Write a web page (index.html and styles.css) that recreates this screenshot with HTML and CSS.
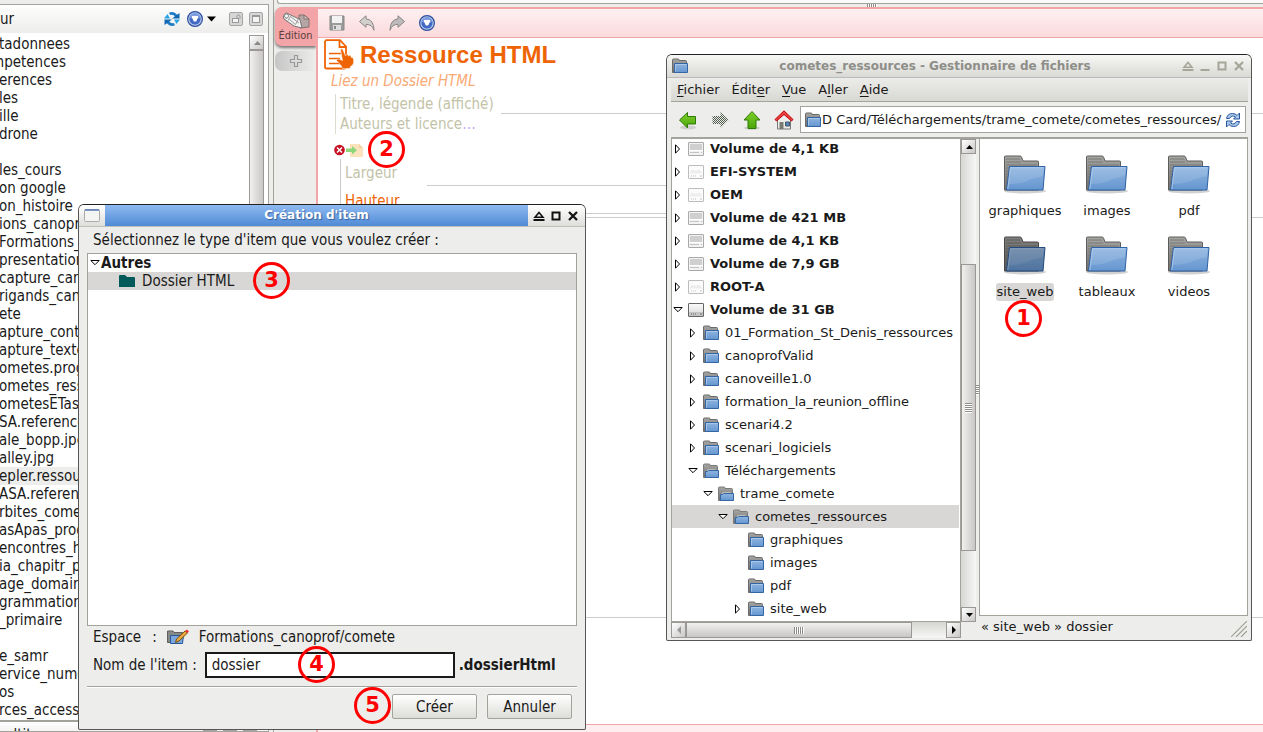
FILE: index.html
```html
<!DOCTYPE html>
<html lang="fr">
<head>
<meta charset="utf-8">
<title>Création d'item</title>
<link rel="stylesheet" href="styles.css">
</head>
<body>
<svg class="defs" aria-hidden="true">
  <defs>
    <linearGradient id="gBlue" x1="0" y1="0" x2="0" y2="1"><stop offset="0" stop-color="#8fb5e0"/><stop offset="1" stop-color="#6596d0"/></linearGradient>
    <linearGradient id="gGray" x1="0" y1="0" x2="0" y2="1"><stop offset="0" stop-color="#a6a6a4"/><stop offset="1" stop-color="#6e6e6c"/></linearGradient>
    <linearGradient id="gGreen" x1="0" y1="0" x2="0" y2="1"><stop offset="0" stop-color="#7fd02c"/><stop offset="1" stop-color="#4aa508"/></linearGradient>
    <linearGradient id="gDisk" x1="0" y1="0" x2="0" y2="1"><stop offset="0" stop-color="#fafafa"/><stop offset="1" stop-color="#d8d8d8"/></linearGradient>
    <pattern id="pDots" width="2" height="2" patternUnits="userSpaceOnUse"><rect width="1" height="1" fill="#4d5a4a"/><rect x="1" y="1" width="1" height="1" fill="#4d5a4a"/></pattern>
  </defs>
  <symbol id="folder" viewBox="0 0 16 16">
    <path d="M.5 14.5V2q0-1 1-1H6q1 0 1 1v.500h6.500q1 0 1 1V14.500z" fill="url(#gGray)" stroke="#6b6b69"/>
    <path d="M2.500 5.500h13v9h-13z" fill="url(#gBlue)" stroke="#3465a4"/>
    <path d="M3.500 13.500v-7h11" fill="none" stroke="#b4cdea" stroke-width=".8"/>
  </symbol>
  <symbol id="folder-open" viewBox="0 0 16 16">
    <path d="M.5 14.500V2q0-1 1-1H6q1 0 1 1v.500h6.500q1 0 1 1V14.500z" fill="url(#gGray)" stroke="#7b7b79"/>
    <path d="M4.500 6.500h8v5h-8z" fill="#e8e8e6"/>
    <path d="M2.500 8.500h2l1-1h10v7h-13z" fill="url(#gBlue)" stroke="#3465a4"/>
  </symbol>
  <symbol id="folder-big" viewBox="0 0 46 40">
    <ellipse cx="23" cy="37" rx="21" ry="2.500" fill="#000" opacity=".18"/>
    <path d="M2.500 36V3q0-1 1-1H18q1 0 1.500 1l1.500 4h14.500q1 0 1 1v28z" fill="url(#gGray)" stroke="#5c5c5a"/>
    <path d="M4 5h14M4 8h15M4 11h31M4 14h3M4 17h3M4 20h3M4 23h2M4 26h2M4 29h2M4 32h2" stroke="#6f6f6d" stroke-width=".8"/>
    <path d="M7.500 12.500h35.500l-2 23.500H4.500z" fill="url(#gBlue)" stroke="#2f61a5"/>
    <path d="M8.500 14h33l-.8 8q-10 2-18 6-7 2-16 2z" fill="#fff" opacity=".12"/>
    <path d="M5.800 35 8.500 13.700h33" fill="none" stroke="#b6d0ee" stroke-width=".8"/>
  </symbol>
  <symbol id="disk" viewBox="0 0 16 14">
    <rect x=".5" y=".5" width="15" height="13" rx=".5" fill="#f2f2f2" stroke="#a9a9a9"/>
    <rect x="2" y="2" width="12" height="6" fill="#cfcfcf"/>
    <path d="M2 10.500h9M13 10.500h1" stroke="#c4c4c4"/><path d="M1 8.500h14" stroke="#fff"/>
  </symbol>
  <symbol id="disk-light" viewBox="0 0 16 14">
    <rect x=".5" y=".5" width="15" height="13" rx=".5" fill="#fcfcfc" stroke="#bcbcbc"/>
    <path d="M1.500 8.500h13l-3-4q-4 2-8 0z" fill="#ededed"/>
    <path d="M3 11h1M5 11h1M7 11h1M12 11h2" stroke="#dedede" stroke-width="2"/>
  </symbol>
  <symbol id="disk-dark" viewBox="0 0 16 14">
    <rect x=".5" y=".5" width="15" height="13" rx=".5" fill="url(#gDisk)" stroke="#666"/>
    <path d="M1 9h14v4H1z" fill="#c4c4c4"/>
    <path d="M3 11h1M5 11h1M7 11h1M12 11h2" stroke="#999" stroke-width="2"/>
  </symbol>
  <symbol id="closed" viewBox="0 0 10 10"><path d="M2.500.800 6.500 5 2.500 9.200z" fill="#fff" stroke="#000"/></symbol>
  <symbol id="opened" viewBox="0 0 10 10"><path d="M.8 2.500h8.400L5 6.700z" fill="#fff" stroke="#000"/></symbol>
  <symbol id="tri-up" viewBox="0 0 8 8"><path d="M1 6h7L4.500 2z" fill="currentColor"/></symbol>
  <symbol id="tri-down" viewBox="0 0 8 8"><path d="M1 2h7L4.500 6z" fill="currentColor"/></symbol>
  <symbol id="tri-left" viewBox="0 0 8 8"><path d="M6 0v8L2 4z" fill="currentColor"/></symbol>
  <symbol id="tri-right" viewBox="0 0 8 8"><path d="M2 0v8l4-4z" fill="currentColor"/></symbol>
  <symbol id="orb" viewBox="0 0 16 16">
    <circle cx="8" cy="8" r="7.400" fill="#b8c8e8" stroke="#2b4ea0" stroke-width="1.200"/>
    <circle cx="8" cy="8" r="5.600" fill="#4068c4"/><path d="M3 7a5 5 0 0 1 10 0q-5 2-10 0z" fill="#7d9de0"/>
    <path d="M5 5h6v1.500L9.200 10.500H6.800L5 6.500z" fill="#fff"/>
  </symbol>
  <symbol id="wc-shade" viewBox="0 0 12 12"><path d="M2 7.200h8L6 2.500z" fill="none" stroke="currentColor" stroke-width="1.500"/><path d="M.5 10h11" stroke="currentColor" stroke-width="2"/></symbol>
  <symbol id="wc-min" viewBox="0 0 12 12"><path d="M1.500 10h9" stroke="currentColor" stroke-width="2"/></symbol>
  <symbol id="wc-max" viewBox="0 0 12 12"><rect x="2.500" y="2.500" width="7" height="7" fill="none" stroke="currentColor" stroke-width="2"/></symbol>
  <symbol id="wc-close" viewBox="0 0 12 12"><path d="m2 2 8 8M10 2l-8 8" stroke="currentColor" stroke-width="2.200"/></symbol>
</svg>

<main class="app">
  <aside class="side">
    <section class="panel">
      <header class="panel-head">
        <h2 class="panel-title">ur</h2>
        <button class="tool" aria-label="Actualiser"><svg class="i16" viewBox="0 0 16 16"><path d="M5.500 2.800q4.500-1.500 7 2.700" fill="none" stroke="#1d7cc6" stroke-width="2.600"/><path d="M8 7.500h7.500V2z" fill="#1268b0"/><path d="M10.500 13.200q-4.500 1.500-7-2.700" fill="none" stroke="#1d7cc6" stroke-width="2.600"/><path d="M8 8.500H.500V14z" fill="#1268b0"/><path d="M3.500 3 0 7.500h6z" fill="#28a4e8"/><path d="M12.500 13 16 8.500h-6z" fill="#28a4e8"/></svg></button>
        <button class="tool menu-tool" aria-label="Options"><svg class="i16"><use href="#orb"/></svg><svg class="caret" viewBox="0 0 9 6"><path d="M0 .500h9L4.500 5.500z"/></svg></button>
        <button class="mini" aria-label="Verrouiller"><svg class="i14" viewBox="0 0 14 14"><rect x=".5" y=".5" width="13" height="13" rx="1.500" fill="#d6d6d5" stroke="#a5a5a5"/><rect x="3.500" y="6.500" width="6" height="4" fill="#f4f4f4" stroke="#999"/><path d="M8 6V4q0-1 1.500-1T11 4v3" fill="none" stroke="#999"/></svg></button>
        <button class="mini" aria-label="Agrandir"><svg class="i14" viewBox="0 0 14 14"><rect x=".5" y=".5" width="13" height="13" rx="1.500" fill="#d6d6d5" stroke="#a5a5a5"/><rect x="3.500" y="3.500" width="7" height="7" fill="#f4f4f4" stroke="#999"/><path d="M3 4.500h8" stroke="#999"/></svg></button>
      </header>
      <div class="panel-body">
        <ul class="items">
          <li>tadonnees</li><li class="clipped">mpetences</li><li>erences</li><li>les</li><li>ille</li><li>drone</li><li></li><li>les_cours</li><li>on google</li><li>on_histoire</li><li>ions_canoprof</li><li>Formations_</li><li>presentation</li><li>capture_cano</li><li>rigands_cano</li><li>ete</li><li>apture_conte</li><li>apture_texte</li><li>ometes.prog</li><li>ometes_resso</li><li>ometesETaste</li><li>SA.reference</li><li>ale_bopp.jpg</li><li>alley.jpg</li><li class="current">epler.ressource</li><li>ASA.reference</li><li>rbites_comete</li><li>asApas_prog</li><li>encontres_ha</li><li>ia_chapitr_pr</li><li>age_domaine</li><li>grammation_</li><li>_primaire</li><li></li><li>e_samr</li><li>ervice_nume</li><li>os</li><li>rces_accessi</li>
        </ul>
        <div class="vbar light"><button class="sb" aria-label="Défiler vers le haut"><svg class="i8"><use href="#tri-up"/></svg></button><div class="thumb grow"></div></div>
      </div>
    </section>
    <section class="panel next">
      <h2 class="panel-title">ultit</h2>
      <span class="stub"></span><span class="stub"></span><span class="stub"></span>
    </section>
  </aside>

  <div class="work">
    <div class="strip"></div>
    <div class="strip-sash"><span class="strip-grip"></span></div>
    <div class="work-row">
      <nav class="tabs">
        <button class="tab active"><svg class="pencil" viewBox="0 0 28 17"><path d="M17 3h5l5 4v8l-9 1-1-5z" fill="#b5a5a5" stroke="#85706f"/><path d="M22 3v4h5z" fill="#d8cccc" stroke="#85706f"/><path d="M4.500 1 18 7.500l2 8.500-8-2L2 7q-2-4 2.500-6z" fill="#f4f4f4" stroke="#777"/><path d="M6.500 2.500 4 7M9 3.500 6 8.500M9 5l8 6M7.500 7.500l6 5M13.500 12.500l3-5.500" stroke="#999" fill="none"/><circle cx="4.500" cy="4" r="2" fill="#fff" stroke="#888"/></svg><span>Édition</span></button>
        <button class="tab add" aria-label="Ajouter"><svg class="i14" viewBox="0 0 14 14"><path d="M5.500 1.500h3v4h4v3h-4v4h-3v-4h-4v-3h4z" fill="#ddd" stroke="#999" stroke-width="1.200"/></svg></button>
      </nav>
      <section class="editor">
        <div class="editor-tools">
          <button class="tool" aria-label="Enregistrer"><svg class="i16" viewBox="0 0 16 16"><path d="M1 1h14v14H1z" fill="#9b9b9b" stroke="#858585"/><path d="M3 1h10v7H3z" fill="#f2f2f2"/><path d="M4 10h8v5H4z" fill="#ddd"/><path d="M5 11h2v3H5z" fill="#888"/></svg></button>
          <button class="tool" aria-label="Annuler l'action"><svg class="i16" viewBox="0 0 16 16"><path d="M.5 6.500 7 .800v3q8 1 8 11.500-2-6-8-6v3z" fill="#d2cfcf" stroke="#8a8686"/></svg></button>
          <button class="tool" aria-label="Rétablir"><svg class="i16" viewBox="0 0 16 16"><path d="M15.500 6.500 9 .800v3q-8 1-8 11.500 2-6 8-6v3z" fill="#bcbaba" stroke="#8a8686"/></svg></button>
          <button class="tool" aria-label="Menu"><svg class="i16"><use href="#orb"/></svg></button>
        </div>
        <div class="page">
          <div class="page-head">
            <svg class="res" viewBox="0 0 31 31"><path d="M2.200 1.200H16l6 6.300V28q0 1.500-1.500 1.500H2.500Q1 29.500 1 28V2.500z" fill="#fff" stroke="#ee6404" stroke-width="1.800"/><path d="M15.500 1.500V8H22" fill="none" stroke="#ee6404" stroke-width="1.800"/><path d="M5 14.500h12M5 19.500h11M5 24.500h12" stroke="#ee6404" stroke-width="1.600"/><path d="M16.500 10.500q1.500-1.500 2.500.500l2.500 6q.3-2.500 2.300-1.500l.7 1.500q1.500-1.500 2.500.500l.4 1q1.800-.5 2.100 1.500 1 6-3 7.500l-.5 2h-7.500l-1.500-3-4.500-5q0-2 2.500-1.500l3.500 1.500z" fill="#ee6404" stroke="#fff" stroke-width=".5"/></svg>
            <h1>Ressource HTML</h1>
          </div>
          <p class="hint">Liez un Dossier HTML</p>
          <div class="meta">
            <div class="field"><span>Titre, légende (affiché)</span><i class="rule"></i></div>
            <div class="field"><span>Auteurs et licence<a href="#licence">…</a></span></div>
          </div>
          <div class="linkrow"><svg class="err" viewBox="0 0 30 14"><circle cx="5.500" cy="7" r="5.300" fill="#c81022"/><path d="m3 4.500 5 5M8 4.500l-5 5" stroke="#fff" stroke-width="1.500"/><path d="M16 1h9l4 3.500V14H16z" fill="#fbe3bd"/><path d="M25 1v4h4z" fill="#f1d2a0"/><path d="M12 5.500h6V3l5 4.200-5 4.300V9h-6z" fill="#8ed67a"/></svg></div>
          <div class="dims">
            <div class="field short"><span>Largeur</span><i class="rule"></i></div>
            <div class="field hot"><span>Hauteur</span></div>
          </div>
          <div class="block"></div>
        </div>
        <footer class="editor-foot"></footer>
      </section>
    </div>
  </div>
</main>

<section class="window files" aria-label="Gestionnaire de fichiers">
  <header class="fm-title"><svg class="i16"><use href="#folder"/></svg><h2>cometes_ressources - Gestionnaire de fichiers</h2>
    <div class="wc"><button aria-label="Enrouler"><svg><use href="#wc-shade"/></svg></button><button aria-label="Réduire"><svg><use href="#wc-min"/></svg></button><button aria-label="Maximiser"><svg><use href="#wc-max"/></svg></button><button aria-label="Fermer"><svg><use href="#wc-close"/></svg></button></div>
  </header>
  <div class="fm-inner">
    <nav class="menubar"><button><u>F</u>ichier</button><button>Édit<u>e</u>r</button><button><u>V</u>ue</button><button>A<u>l</u>ler</button><button><u>A</u>ide</button></nav>
    <div class="fm-tools">
      <button class="nav" aria-label="Précédent"><svg viewBox="0 0 20 20"><ellipse cx="10" cy="17.500" rx="8" ry="2" opacity=".13"/><path d="m1.500 10 8-7.500V6.500h8v7.500h-8v4z" fill="url(#gGreen)" stroke="#2f7a05"/></svg></button>
      <button class="nav" aria-label="Suivant"><svg viewBox="0 0 20 20"><path d="m18.500 10-8-8V6h-8v8h8v4z" fill="url(#pDots)"/></svg></button>
      <button class="nav" aria-label="Dossier parent"><svg viewBox="0 0 20 20"><ellipse cx="10" cy="18" rx="8" ry="1.800" opacity=".13"/><path d="M10 1.500 2 10h4v8.500h8V10h4z" fill="url(#gGreen)" stroke="#2f7a05"/></svg></button>
      <button class="nav" aria-label="Dossier personnel"><svg viewBox="0 0 20 20"><path d="M3.500 9 10 3l6.500 6v10h-13z" fill="#ededeb" stroke="#777"/><path d="M5.500 12h4v7h-4z" fill="#777b70"/><path d="M11.500 12h4v4h-4z" fill="#5a84c0" stroke="#456"/><path d="M1 9.500 10 .800l9 8.700-1.500 1.500L10 4.500 2.500 11z" fill="#ef4040" stroke="#b80000"/></svg></button>
      <div class="path"><svg class="i16"><use href="#folder"/></svg><input type="text" aria-label="Emplacement" value="D Card/Téléchargements/trame_comete/cometes_ressources/"><button aria-label="Recharger"><svg class="i16" viewBox="0 0 16 16"><path d="M1.500 6.500q1-5 6-5 3 0 4.500 2L14.500 1v6H8.500l2-2Q7 2.500 4.500 6.500z" fill="#a9c6ec" stroke="#28589a"/><path d="M14.500 9.500q-1 5-6 5-3 0-4.500-2L1.500 15V9h6l-2 2q3.500 2.500 6-1.500z" fill="#a9c6ec" stroke="#28589a"/></svg></button></div>
    </div>
    <div class="fm-body">
      <div class="tree-col">
        <div class="tree-main">
          <ul class="tree">
            <li class="vol"><svg class="ex"><use href="#closed"/></svg><svg class="dk"><use href="#disk"/></svg>Volume de 4,1 KB</li>
            <li class="vol"><svg class="ex"><use href="#closed"/></svg><svg class="dk"><use href="#disk-light"/></svg>EFI-SYSTEM</li>
            <li class="vol"><svg class="ex"><use href="#closed"/></svg><svg class="dk"><use href="#disk-light"/></svg>OEM</li>
            <li class="vol"><svg class="ex"><use href="#closed"/></svg><svg class="dk"><use href="#disk"/></svg>Volume de 421 MB</li>
            <li class="vol"><svg class="ex"><use href="#closed"/></svg><svg class="dk"><use href="#disk"/></svg>Volume de 4,1 KB</li>
            <li class="vol"><svg class="ex"><use href="#closed"/></svg><svg class="dk"><use href="#disk"/></svg>Volume de 7,9 GB</li>
            <li class="vol"><svg class="ex"><use href="#closed"/></svg><svg class="dk"><use href="#disk-light"/></svg>ROOT-A</li>
            <li class="vol"><svg class="ex"><use href="#opened"/></svg><svg class="dk"><use href="#disk-dark"/></svg>Volume de 31 GB</li>
            <li class="l1"><svg class="ex"><use href="#closed"/></svg><svg class="i16"><use href="#folder"/></svg>01_Formation_St_Denis_ressources</li>
            <li class="l1"><svg class="ex"><use href="#closed"/></svg><svg class="i16"><use href="#folder"/></svg>canoprofValid</li>
            <li class="l1"><svg class="ex"><use href="#closed"/></svg><svg class="i16"><use href="#folder"/></svg>canoveille1.0</li>
            <li class="l1"><svg class="ex"><use href="#closed"/></svg><svg class="i16"><use href="#folder"/></svg>formation_la_reunion_offline</li>
            <li class="l1"><svg class="ex"><use href="#closed"/></svg><svg class="i16"><use href="#folder"/></svg>scenari4.2</li>
            <li class="l1"><svg class="ex"><use href="#closed"/></svg><svg class="i16"><use href="#folder"/></svg>scenari_logiciels</li>
            <li class="l1"><svg class="ex"><use href="#opened"/></svg><svg class="i16"><use href="#folder-open"/></svg>Téléchargements</li>
            <li class="l2"><svg class="ex"><use href="#opened"/></svg><svg class="i16"><use href="#folder-open"/></svg>trame_comete</li>
            <li class="l3 current"><svg class="ex"><use href="#opened"/></svg><svg class="i16"><use href="#folder-open"/></svg>cometes_ressources</li>
            <li class="l4"><svg class="ex"></svg><svg class="i16"><use href="#folder"/></svg>graphiques</li>
            <li class="l4"><svg class="ex"></svg><svg class="i16"><use href="#folder"/></svg>images</li>
            <li class="l4"><svg class="ex"></svg><svg class="i16"><use href="#folder"/></svg>pdf</li>
            <li class="l4"><svg class="ex"><use href="#closed"/></svg><svg class="i16"><use href="#folder"/></svg>site_web</li>
          </ul>
          <div class="vbar"><button class="sb" aria-label="Haut"><svg class="i8"><use href="#tri-up"/></svg></button><div class="trough before"></div><div class="thumb tall"><span class="grip"></span></div><div class="trough"></div><button class="sb" aria-label="Bas"><svg class="i8"><use href="#tri-down"/></svg></button></div>
        </div>
        <div class="hbar"><button class="sb off" aria-label="Gauche"><svg class="i8"><use href="#tri-left"/></svg></button><div class="thumb wide"><span class="grip side-grip"></span></div><div class="trough"></div><button class="sb" aria-label="Droite"><svg class="i8"><use href="#tri-right"/></svg></button></div>
      </div>
      <div class="sash"><span class="grip"></span></div>
      <div class="view-col">
        <div class="icons">
          <figure><svg><use href="#folder-big"/></svg><figcaption>graphiques</figcaption></figure>
          <figure><svg><use href="#folder-big"/></svg><figcaption>images</figcaption></figure>
          <figure><svg><use href="#folder-big"/></svg><figcaption>pdf</figcaption></figure>
          <figure class="sel"><svg><use href="#folder-big"/></svg><figcaption>site_web</figcaption></figure>
          <figure><svg><use href="#folder-big"/></svg><figcaption>tableaux</figcaption></figure>
          <figure><svg><use href="#folder-big"/></svg><figcaption>videos</figcaption></figure>
        </div>
        <div class="status"><span>« site_web » dossier</span><svg class="i16" viewBox="0 0 16 16"><path d="M0 16 16 0M5 16 16 5M10 16l6-6" stroke="#a0a096" stroke-width="1.200"/></svg></div>
      </div>
    </div>
  </div>
</section>

<section class="window dialog" role="dialog" aria-label="Création d'item">
  <header class="dlg-title"><svg class="appicon" viewBox="0 0 16 14"><rect x=".5" y=".5" width="15" height="12" rx="1" fill="#f4f4f2" stroke="#aaa"/><path d="M1 1h14" stroke="#5779b5" stroke-width="1.500"/></svg><h2>Création d'item</h2>
    <div class="wc"><button aria-label="Enrouler"><svg><use href="#wc-shade"/></svg></button><button aria-label="Maximiser"><svg><use href="#wc-max"/></svg></button><button aria-label="Fermer"><svg><use href="#wc-close"/></svg></button></div>
  </header>
  <form class="dlg-body">
    <p class="prompt">Sélectionnez le type d'item que vous voulez créer :</p>
    <ul class="types">
      <li class="group"><svg class="ex"><use href="#opened"/></svg>Autres</li>
      <li class="current type"><svg class="tf" viewBox="0 0 16 12"><path d="M0 1q0-1 1-1h5l2 2h7q1 0 1 1v9H0z" fill="#005a5a"/></svg>Dossier HTML</li>
    </ul>
    <div class="space"><span class="space-label">Espace</span><span>:</span><svg class="ws" viewBox="0 0 23 16"><path d="M.5 13.500V2H6l1 1.500h8.500v10z" fill="#888a88" stroke="#5f615f"/><path d="M3.500 6.500h13l-1 8h-12z" fill="#7ba6dc" stroke="#28589a"/><path d="m8.500 13.500 1-3.500L18 2l2.500 2-8.500 8z" fill="#e8a63c" stroke="#704505" stroke-width=".9"/><path d="m18 2 2-1.500 2 2L20.500 4z" fill="#e33"/></svg><span>Formations_canoprof/comete</span></div>
    <div class="name"><label for="nom">Nom de l'item :</label><input id="nom" type="text" value="dossier"><b>.dossierHtml</b></div>
    <div class="actions"><button type="button">Créer</button><button type="button">Annuler</button></div>
  </form>
</section>

<span class="mark m1">1</span><span class="mark m2">2</span><span class="mark m3">3</span><span class="mark m4">4</span><span class="mark m5">5</span>
</body>
</html>
```
FILE: styles.css
```css
* { box-sizing: border-box; }
body { margin: 0; height: 100vh; overflow: hidden; position: relative; background: #ededeb; color: #1a1a1a; font: 15px/18px "DejaVu Sans Condensed", "DejaVu Sans", sans-serif; }
h1, h2, p, ul, figure { margin: 0; padding: 0; font-weight: normal; }
ul { list-style: none; }
button { margin: 0; padding: 0; border: 0; background: none; font: inherit; color: inherit; }
input { font: inherit; color: inherit; min-width: 0; }
svg { display: block; flex: none; }
.defs { position: absolute; width: 0; height: 0; }
.i16 { width: 16px; height: 16px; }
.i14 { width: 14px; height: 14px; }
.i8 { width: 8px; height: 8px; }

/* Application behind the windows */
.app { display: flex; height: 100%; }
.side { flex: none; width: 269px; display: flex; flex-direction: column; padding-top: 4px; }
.panel { border: 1px solid #a3a39b; border-left: 0; background: #fff; }
.side .panel:first-child { flex: 1; min-height: 0; display: flex; flex-direction: column; }
.panel-head { display: flex; align-items: center; height: 28px; padding-right: 5px; background: linear-gradient(#fefefe, #ededeb); }
.panel-title { flex: 1; font-size: 15px; }
.menu-tool { display: flex; align-items: center; gap: 4px; margin: 0 13px 0 7px; }
.caret { width: 9px; height: 6px; }
.mini + .mini { margin-left: 6px; }
.panel-body { flex: 1; min-height: 0; display: flex; padding: 2px 4px 0 0; }
.items { flex: 1; height: 100%; overflow: hidden; white-space: nowrap; }
.items li { height: 18px; text-indent: -1px; }
.items .clipped { text-indent: -9px; }
.current { background: #d8d7d5; }
.items .current { background: #ededeb; }
.next { flex: none; display: flex; height: 11px; overflow: hidden; padding: 4px 11px 0 5px; gap: 6px; background: linear-gradient(#fefefe, #f4f4f3); }
.stub { width: 14px; height: 14px; margin-top: 4px; border: 1px solid #a5a5a5; background: #d6d6d5; }

.work { flex: 1; min-width: 0; margin-left: 4px; border-left: 1px solid #a3a39b; display: flex; flex-direction: column; }
.strip { height: 4px; margin-left: 3px; background: #fafafa; border: 1px solid #a3a39b; border-width: 0 0 1px 1px; border-radius: 0 0 0 3px; }
.strip-sash { height: 3px; padding-left: 60%; }
.strip-grip { display: block; width: 10px; height: 3px; background: repeating-linear-gradient(90deg, #8c8c88 0 1px, #fff 1px 2px); }
.work-row { flex: 1; min-height: 0; display: flex; }
.tabs { flex: none; width: 42px; padding-left: 1px; }
.tab { display: flex; flex-direction: column; align-items: center; justify-content: center; width: 100%; font: 11px/12px "DejaVu Sans Condensed", "DejaVu Sans", sans-serif; color: #5a4040; }
.tab.active { height: 39px; background: #f2a4a6; border-radius: 7px 0 0 7px; box-shadow: 0 2px 3px #777; gap: 1px; }
.tab.add { height: 20px; margin-top: 5px; border-radius: 7px 0 0 7px; background: linear-gradient(90deg, #c6c6c6, #ededeb); }
.pencil { width: 28px; height: 17px; }
.editor { flex: 1; min-width: 0; display: flex; flex-direction: column; border: 2px solid #f2a4a6; border-width: 2px 0 0 2px; background: #fff; }
.editor-tools { display: flex; align-items: center; gap: 14px; height: 29px; padding-left: 11px; background: linear-gradient(#fff0f1, #fadadc); border-bottom: 1px solid #f2a4a6; }
.page { flex: 1; min-height: 0; }
.page-head { display: flex; align-items: center; gap: 5px; height: 33px; padding-left: 6px; }
.page-head h1 { font: bold 24px/30px "Liberation Sans", Arial, sans-serif; color: #ee6404; }
.res { width: 31px; height: 31px; }
.hint { padding-left: 13px; font-style: italic; line-height: 20px; color: #f8a976; }
.meta { margin: 3px 0 0 17px; padding-left: 4px; border-left: 1px solid #dcdcd0; color: #c3c3a8; }
.field { display: flex; align-items: flex-end; height: 20px; line-height: 20px; }
.meta a { color: #c9a6f5; text-decoration: none; }
.rule { flex: 1; height: 1px; margin-left: 7px; background: #ccc; }
.linkrow { padding: 9px 0 2px 16px; }
.err { width: 30px; height: 14px; }
.dims { height: 55px; margin: 0 20px 0 22px; padding: 4px 0 0 4px; border: solid #ccc; border-width: 0 0 1px 1px; overflow: hidden; color: #c3c3a8; }
.dims .short { height: 23px; align-items: flex-start; }
.short .rule { align-self: flex-end; margin-left: 30px; }
.hot { margin-top: 5px; color: #ee6404; }
.block { height: 401px; margin-top: 3px; border: solid #ccc; border-width: 1px 0; }
.editor-foot { height: 8px; background: #ffeeef; border-top: 1px solid #f2a4a6; }

/* Window frames */
.window { position: absolute; display: flex; flex-direction: column; background: #ededeb; border: 1px solid #555; border-top-color: #222; border-radius: 6px 6px 2px 2px; overflow: hidden; }
.wc { display: flex; gap: 5px; }
.wc svg { width: 12px; height: 12px; }
.sb { display: flex; flex: none; align-items: center; justify-content: center; width: 15px; height: 15px; border: 1px solid #9a9796; background: linear-gradient(135deg, #fff, #c9c7c6); color: #000; }
.off { color: #999; }
.vbar { flex: none; display: flex; flex-direction: column; width: 15px; background: linear-gradient(90deg, #d6d6d3, #f7f7f5); }
.vbar.light .sb { color: #888; }
.thumb { display: flex; align-items: center; justify-content: center; border: 1px solid #9a9796; background: linear-gradient(90deg, #f0f0ef, #c9c7c6); }
.grow { flex: 1; }
.trough { flex: 1; }
.grip { width: 7px; height: 10px; background: repeating-linear-gradient(#8c8c88 0 1px, #fff 1px 2px); }
.side-grip { width: 10px; height: 7px; background: repeating-linear-gradient(90deg, #8c8c88 0 1px, #fff 1px 2px); }

/* File manager */
.files { left: 666px; top: 54px; width: 586px; height: 587px; font: 13px/18px "DejaVu Sans", sans-serif; }
.fm-title { display: flex; align-items: center; flex: none; height: 23px; padding: 0 6px 0 5px; background: linear-gradient(#f7f7f5, #d9d9d5); border-bottom: 1px solid #bbb; color: #a5a598; }
.fm-title h2 { flex: 1; text-align: center; font: bold 12px/18px "DejaVu Sans", sans-serif; color: #8e8e89; }
.fm-inner { flex: 1; min-height: 0; display: flex; flex-direction: column; padding: 0 3px 0 4px; }
.menubar { display: flex; gap: 12px; height: 24px; padding: 0 6px; background: linear-gradient(#ececea, #d8d8d3); border-bottom: 1px solid #a3a39b; }
.menubar u { text-underline-offset: 2px; }
.fm-tools { display: flex; align-items: center; gap: 12px; height: 37px; padding: 0 2px 0 7px; border-bottom: 2px solid #a3a39b; }
.nav svg { width: 20px; height: 20px; }
.path { flex: 1; min-width: 0; display: flex; align-items: center; height: 27px; margin-left: -6px; padding: 0 4px; background: #fff; border: 1px solid #a3a39b; }
.path input { flex: 1; border: 0; padding: 0 0 0 1px; background: none; outline: 0; }
.fm-body { flex: 1; min-height: 0; display: flex; }
.tree-col { flex: none; width: 305px; display: flex; flex-direction: column; padding-bottom: 2px; }
.tree-main { flex: 1; min-height: 0; display: flex; }
.tree { flex: 1; min-width: 0; overflow: hidden; background: #fff; border: solid #a3a39b; border-width: 0 1px 1px; white-space: nowrap; }
.tree li { display: flex; align-items: center; height: 23px; margin-right: 1px; padding-left: 1px; }
.tree li:first-child { margin-top: -2px; }
.ex { width: 10px; height: 10px; margin-right: 5px; }
.tree .i16, .dk { width: 16px; margin-right: 6px; }
.dk { height: 14px; }
.tree .vol { font-weight: bold; }
.tree .l1 { padding-left: 16px; }
.tree .l2 { padding-left: 31px; }
.tree .l3 { padding-left: 46px; }
.tree .l4 { padding-left: 61px; }
.before { flex: none; height: 110px; }
.tall { height: 287px; }
.hbar { flex: none; display: flex; height: 16px; margin-right: 15px; background: linear-gradient(#d6d6d3, #f7f7f5); }
.hbar .sb { height: 16px; }
.wide { width: 226px; background: linear-gradient(#f0f0ef, #c9c7c6); }
.sash { flex: none; width: 3px; display: flex; align-items: center; }
.sash .grip { width: 3px; }
.view-col { flex: 1; min-width: 0; display: flex; flex-direction: column; }
.icons { flex: 1; min-height: 0; display: grid; grid-template-columns: repeat(3, 82px); grid-auto-rows: 81px; align-content: start; background: #fff; border: 1px solid #a3a39b; border-top: 0; padding: 15px 0 0 4px; }
.icons figure { display: flex; flex-direction: column; align-items: center; gap: 8px; }
.icons svg { width: 46px; height: 40px; }
.icons figcaption { padding: 0 1px; border-radius: 3px; }
.sel figcaption { background: #d8d7d5; }
.sel svg { filter: brightness(.77); }
.status { display: flex; align-items: flex-start; justify-content: space-between; height: 24px; padding: 2px 1px 2px 2px; }
.status svg { margin-top: 3px; }

/* Item creation dialog */
.dialog { left: 78px; top: 204px; width: 508px; height: 526px; }
.dlg-title { display: flex; align-items: center; flex: none; height: 22px; padding-right: 6px; background: linear-gradient(#fff, #dededb); border-bottom: 1px solid #c0c0bb; color: #111; }
.appicon { width: 16px; height: 14px; margin: 0 5px; }
.dlg-title h2 { flex: 1; align-self: stretch; margin-right: 5px; text-align: center; font: bold 12px/21px "DejaVu Sans", sans-serif; color: #fff; text-shadow: 1px 1px 1px #34629f; background: linear-gradient(#8fbaf0, #4f8ad6); }
.dlg-body { flex: 1; min-height: 0; display: flex; flex-direction: column; padding: 4px 8px 10px; }
.prompt { padding-left: 6px; margin-bottom: 4px; }
.types { flex: 1; background: #fff; border: 1px solid #a3a39b; }
.types li { display: flex; align-items: center; height: 18px; }
.types .group { font-weight: bold; padding-left: 2px; }
.types .group .ex { margin-right: 1px; }
.types .type { padding-left: 31px; }
.tf { width: 16px; height: 12px; margin-right: 7px; }
.space { display: flex; align-items: center; height: 21px; padding-left: 6px; }
.space-label { margin-right: 11px; }
.ws { width: 23px; height: 16px; margin: 0 9px 0 10px; }
.name { display: flex; align-items: center; height: 40px; padding: 0 0 4px 6px; border-bottom: 1px solid #a3a39b; box-shadow: 0 1px 0 #fff; }
.name input { width: 250px; height: 26px; margin: 0 4px 0 8px; padding: 0 5px; border: 2px solid #1a1a1a; background: #fff; outline: 0; }
.actions { display: flex; justify-content: flex-end; gap: 10px; padding: 7px 5px 0 0; }
.actions button { width: 85px; height: 25px; border: 1px solid #a3a39b; border-radius: 2px; background: linear-gradient(#fff, #dcdcd8); }

/* Numbered callouts over the windows */
.mark { position: absolute; width: 37px; height: 37px; border: 3px solid #f00; border-radius: 50%; color: #f00; font: bold 21px/31px "DejaVu Sans", sans-serif; text-align: center; }
.m1 { left: 1005px; top: 300px; }
.m2 { left: 368px; top: 131px; }
.m3 { left: 253px; top: 262px; }
.m4 { left: 298px; top: 646px; }
.m5 { left: 354px; top: 687px; }
```
